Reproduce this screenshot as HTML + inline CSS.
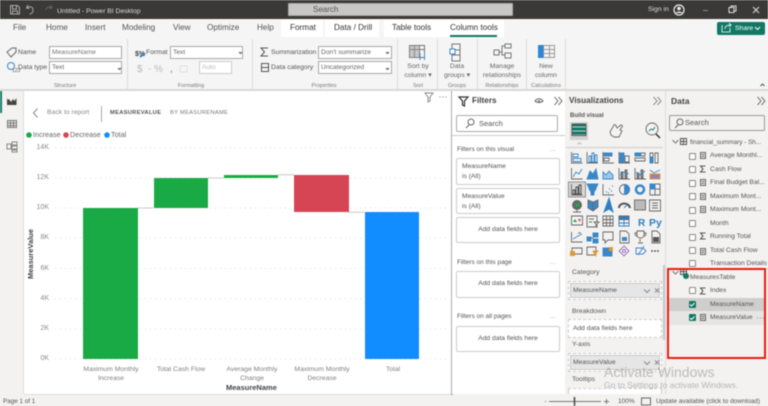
<!DOCTYPE html>
<html><head><meta charset="utf-8"><style>
html,body{margin:0;padding:0;width:768px;height:406px;overflow:hidden;background:#f3f2f1}
body{font-family:"Liberation Sans",sans-serif;color:#444;position:relative}
#r{position:absolute;left:0;top:0;width:768px;height:406px;overflow:hidden;filter:blur(.4px)}
#r div{position:absolute;box-sizing:border-box}
.t{white-space:nowrap;font-size:6.8px;line-height:10px;color:#555}
.c{text-align:center;white-space:nowrap;font-size:6.800px;line-height:9px;color:#666}
.tab{font-size:8.200px;line-height:12px;top:22px;white-space:nowrap;color:#555}
.inp{background:#fff;border:1px solid #a8a8a8;height:13px;font-size:6.700px;line-height:11px;padding-left:2px;color:#666;white-space:nowrap}
.lab{font-size:5.500px;line-height:8px;color:#777;text-align:center;top:82px;white-space:nowrap}
.sep{width:1px;background:#dcdcdc;top:39px;height:50px}
.y{font-size:7px;line-height:8px;color:#888;text-align:right;width:20px;left:29px}
.x{font-size:6.800px;line-height:9px;color:#808080;text-align:center;white-space:nowrap}
.card{background:#fff;border:1px solid #ccc;border-radius:2px;left:456px;width:104px;font-size:6.700px;color:#555}
.add{text-align:center;line-height:24px}
.d{font-size:6.700px;line-height:10px;left:710px;color:#555;white-space:nowrap}
.cb{left:689px;width:7px;height:7px;border:1px solid #888;background:#fff;border-radius:1px}
.well{border:1px dashed #ccc;background:#fff;left:568px;width:94px;height:19px}
.fld{left:570px;width:90px;height:15px;background:#e6e6e6;border:1px solid #c8c8c8;font-size:6.700px;line-height:13px;padding-left:2px;color:#555}
.sec{left:572px;font-size:6.800px;line-height:10px;color:#555}
</style></head><body><div id="r">

<div style="left:0;top:0;width:768px;height:19px;background:#3a3937"></div>
<svg style="position:absolute;left:0;top:0" width="768" height="19" fill="none">
<path d="M10.500 5.500h7l2 2v6.500h-9z M12.500 6v3h4V6 M12.500 14v-3h5v3" stroke="#a8a8a8"/>
<path d="M28 5l-1.500 3 3 .5 M27 8c3-2.500 6-1 6 2s-2 4-3.500 4" stroke="#a8a8a8"/>
<path d="M51 5l1 3-3 .5 M52 8c-2-2-6-1-6 2" stroke="#666"/>
<circle cx="303" cy="8.500" r="3" stroke="#333"/><path d="M300.500 11l-2.500 3" stroke="#333"/>
<circle cx="679" cy="10" r="5" stroke="#eee" stroke-width="1.200"/><circle cx="679" cy="8.500" r="1.800" fill="#eee"/><path d="M675.500 13c1-2 6-2 7 0" fill="#eee"/>
<path d="M703 10.500h5" stroke="#888"/>
<path d="M729 7.500h5v5h-5z M731 7.500v-1.500h5v5h-2" stroke="#ddd"/>
<path d="M753 7l6 6M759 7l-6 6" stroke="#ddd"/>
</svg>
<div class="t" style="left:57px;top:7px;color:#ddd">Untitled - Power BI Desktop</div>
<div style="left:288px;top:3px;width:225px;height:13px;background:#c8c7c6;border:1px solid #aaa;border-radius:1px"></div>
<div class="t" style="left:313px;top:5px;font-size:8px;color:#555">Search</div>
<div class="t" style="left:648px;top:5px;color:#ddd">Sign in</div>

<div style="left:0;top:19px;width:768px;height:71px;background:#f5f5f5"></div>
<div style="left:281px;top:20px;width:42px;height:17px;background:#fff"></div>
<div style="left:325px;top:20px;width:54px;height:17px;background:#fff"></div>
<div style="left:384px;top:20px;width:58px;height:17px;background:#fff"></div>
<div style="left:441px;top:20px;width:63px;height:17px;background:#fff"></div>
<div class="tab" style="left:13px">File</div>
<div class="tab" style="left:46px">Home</div>
<div class="tab" style="left:85px">Insert</div>
<div class="tab" style="left:122px">Modeling</div>
<div class="tab" style="left:173px">View</div>
<div class="tab" style="left:207px">Optimize</div>
<div class="tab" style="left:257px">Help</div>
<div class="tab" style="left:290px;color:#333">Format</div>
<div class="tab" style="left:334px;color:#333">Data / Drill</div>
<div class="tab" style="left:392px;color:#333">Table tools</div>
<div class="tab" style="left:450px;color:#333">Column tools</div>
<div style="left:450px;top:35px;width:47px;height:1.500px;background:#117865"></div>
<div style="left:717px;top:22px;width:48px;height:13px;background:#117865;border-radius:2px"></div>
<div class="t" style="left:735px;top:24px;color:#fff">Share</div>

<div class="t" style="left:18px;top:48px">Name</div>
<div class="inp" style="left:49px;top:46px;width:73px;color:#777">MeasureName</div>
<div class="t" style="left:18px;top:63px">Data type</div>
<div class="inp" style="left:49px;top:61px;width:73px">Text</div>
<div class="lab" style="left:49px;width:32px">Structure</div>
<div class="sep" style="left:127px"></div>
<div class="t" style="left:146px;top:48px">Format</div>
<div class="inp" style="left:170px;top:46px;width:73px">Text</div>
<div class="inp" style="left:199px;top:61px;width:33px;border-color:#ccc;color:#bbb">Auto</div>
<div class="lab" style="left:175px;width:32px">Formatting</div>
<div class="sep" style="left:252px"></div>
<div class="t" style="left:271px;top:48px">Summarization</div>
<div class="inp" style="left:318px;top:46px;width:74px">Don't summarize</div>
<div class="t" style="left:271px;top:63px">Data category</div>
<div class="inp" style="left:318px;top:61px;width:74px">Uncategorized</div>
<div class="lab" style="left:308px;width:32px">Properties</div>
<div class="sep" style="left:397px"></div>
<div class="c" style="left:400px;top:62px;width:36px">Sort by<br>column ▾</div>
<div class="lab" style="left:400px;width:36px">Sort</div>
<div class="sep" style="left:437px"></div>
<div class="c" style="left:438px;top:62px;width:38px">Data<br>groups ▾</div>
<div class="lab" style="left:438px;width:38px">Groups</div>
<div class="sep" style="left:477px"></div>
<div class="c" style="left:478px;top:62px;width:48px">Manage<br>relationships</div>
<div class="lab" style="left:478px;width:48px">Relationships</div>
<div class="sep" style="left:526px"></div>
<div class="c" style="left:527px;top:62px;width:38px">New<br>column</div>
<div class="lab" style="left:527px;width:38px">Calculations</div>
<div class="sep" style="left:565px"></div>
<svg style="position:absolute;left:0;top:0" width="768" height="90" fill="none">
<path d="M722 25v7h8v-4 M725 29c0-3 2-4 6-4l-2-2m2 2l-2 2" stroke="#fff" stroke-width=".8"/>
<path d="M755 27l2.500 2.500 2.500-2.500" stroke="#fff"/>
<path d="M7 52l5-4h4v4l-5 5z" stroke="#666"/>
<circle cx="11" cy="66" r="3.500" stroke="#3a87c8"/>
<path d="M118 68l1.500 1.500L121 68M239 52l1.500 1.500L242 52M386 52l1.500 1.500L389 52M386 68l1.500 1.500L389 68" stroke="#555"/>
<text x="12" y="72" font-size="5" fill="#555" font-family="Liberation Sans">123</text>
<text x="135" y="56" font-size="7" fill="#444" font-weight="bold" font-family="Liberation Sans">$%</text>
<path d="M140 57l5-4" stroke="#3a87c8" stroke-width="2"/>
<text x="137" y="72" font-size="10" fill="#bbb" font-family="Liberation Sans">$</text>
<text x="148" y="71" font-size="6" fill="#bbb" font-family="Liberation Sans">~</text>
<text x="154" y="72" font-size="10" fill="#bbb" font-family="Liberation Sans">%</text>
<text x="170" y="72" font-size="10" fill="#aaa" font-weight="bold" font-family="Liberation Sans">,</text>
<path d="M180 66h7v6h-7z" stroke="#ccc" stroke-dasharray="1 1"/>
<path d="M268 48h-7l3.500 4-3.500 4h7" stroke="#555"/>
<path d="M261.500 63.500h7v8h-7zM261.500 67.500h7" stroke="#555"/>
<path d="M409.500 45.500h15v12h-15z M409.500 49.500h15 M414.500 45.500v12 M419.500 45.500v12" stroke="#777"/>
<path d="M409.500 45.500h10v12h-10z" fill="#999" opacity=".5"/>
<path d="M420 53v7M424.500 52v8" stroke="#3a87c8"/>
<path d="M452 44h8v17h-8zM452 50h8M452 55h8" stroke="#777"/><path d="M450 49h5v5h-5z" fill="#fff" stroke="#3a87c8"/>
<path d="M494 50h5v5h-5zM505 44h6v4h-6zM505 53h6v5h-6zM499 52h3v-6h3M502 52v3h3" stroke="#777"/>
<path d="M538.500 45.500h16v12h-16z M538.500 49.500h16M538.500 53.500h16 M543.500 45.500v12 M549.500 45.500v12" stroke="#999"/>
<path d="M538 45h5.500v13H538z" fill="#2f86d4"/>
<path d="M760.500 86l2-2 2 2" stroke="#555"/>
</svg>
<div style="left:0;top:89px;width:768px;height:2px;background:#d8d8d8"></div>

<!-- left rail -->
<div style="left:0;top:91px;width:2px;height:22px;background:#117865"></div>
<svg style="position:absolute;left:0;top:90px" width="24" height="70" fill="none">
<path d="M7 8v7h9.500V8l-2 3-1.500-2-2 3-2-3-1 1z" fill="#444"/>
<path d="M7.500 30.500h9v7h-9z M7.500 33h9M7.500 35.500h9M10.500 30.500v7M13.500 30.500v7" stroke="#777"/>
<path d="M7 54h4v5H7zM12 52h5v3h-5zM12 56h5v3h-5zM12 60h5v2h-5zM11 56h1" stroke="#888"/>
</svg>
<div style="left:23px;top:91px;width:1px;height:303px;background:#ddd"></div>

<!-- canvas -->
<div style="left:24px;top:91px;width:427px;height:304px;background:#fff"></div>
<div style="left:451px;top:91px;width:1.500px;height:304px;background:#aaa"></div>
<div style="left:24px;top:394px;width:427px;height:1px;background:#ddd"></div>
<svg style="position:absolute;left:0;top:90px" width="452" height="305" fill="none">
<path d="M37.500 18.500l-4 4.500 4 4.500" stroke="#888"/>
<path d="M101.500 16v16" stroke="#aaa"/>
<path d="M425 3h8l-3 4v4l-2 1V7z" stroke="#888"/>
<path d="M55 57.700H447M55 88H447M55 118H447M55 148H447M55 178.500H447M55 208.700H447M55 239H447M55 269H447" stroke="#ddd" stroke-dasharray="1 4"/>
<path d="M137.500 118h16M207.500 88h16.500M278 84.700h16M348.500 122.300h16" stroke="#c8c8c8"/>
<circle cx="29" cy="45" r="2.800" fill="#1aaa45"/>
<circle cx="66" cy="45" r="2.800" fill="#d94452"/>
<circle cx="107" cy="45" r="2.800" fill="#118dff"/>
<circle cx="440" cy="7" r=".6" fill="#888"/><circle cx="443" cy="7" r=".6" fill="#888"/><circle cx="446" cy="7" r=".6" fill="#888"/>
</svg>
<div class="t" style="left:47px;top:108px;color:#888">Back to report</div>
<div class="t" style="left:110px;top:108px;font-size:5.800px;font-weight:bold;color:#555;letter-spacing:.25px">MEASUREVALUE</div>
<div class="t" style="left:170px;top:108px;font-size:5.800px;color:#777;letter-spacing:.25px">BY MEASURENAME</div>
<div class="t" style="left:33px;top:130px;font-size:7.200px;color:#666">Increase</div>
<div class="t" style="left:70px;top:130px;font-size:7.200px;color:#666">Decrease</div>
<div class="t" style="left:111px;top:130px;font-size:7.200px;color:#666">Total</div>

<div class="y" style="top:144px">14K</div>
<div class="y" style="top:174px">12K</div>
<div class="y" style="top:204px">10K</div>
<div class="y" style="top:234px">8K</div>
<div class="y" style="top:265px">6K</div>
<div class="y" style="top:295px">4K</div>
<div class="y" style="top:325px">2K</div>
<div class="y" style="top:355px">0K</div>
<div style="left:83px;top:208px;width:54.500px;height:151px;background:#1aaa45"></div>
<div style="left:153.500px;top:178px;width:54px;height:30px;background:#1aaa45"></div>
<div style="left:224px;top:174.500px;width:54px;height:3.500px;background:#1aaa45"></div>
<div style="left:294px;top:174.700px;width:54.500px;height:37.600px;background:#d64554"></div>
<div style="left:364.500px;top:212px;width:54px;height:147px;background:#118dff"></div>
<div class="x" style="left:70px;top:365px;width:82px">Maximum Monthly<br>Increase</div>
<div class="x" style="left:140px;top:365px;width:82px">Total Cash Flow</div>
<div class="x" style="left:211px;top:365px;width:82px">Average Monthly<br>Change</div>
<div class="x" style="left:281px;top:365px;width:82px">Maximum Monthly<br>Decrease</div>
<div class="x" style="left:352px;top:365px;width:82px">Total</div>
<div class="t" style="left:226px;top:383px;font-size:7.500px;font-weight:bold;color:#444">MeasureName</div>
<div class="t" style="left:6px;top:249px;width:50px;text-align:center;font-size:7.500px;font-weight:bold;color:#444;transform:rotate(-90deg)">MeasureValue</div>

<!-- filters -->
<div style="left:452px;top:91px;width:113px;height:303px;background:#fff"></div>
<div style="left:564.500px;top:91px;width:1px;height:303px;background:#ddd"></div>
<svg style="position:absolute;left:452px;top:90px" width="113" height="40" fill="none">
<path d="M7 7h9l-3.500 4v5l-2-1v-4z" stroke="#333" stroke-width="1.200"/>
<path d="M83 11c2-3 6-3 8 0-2 2-6 2-8 0z" stroke="#666"/><circle cx="87" cy="11" r="1" fill="#666"/>
<path d="M102.500 7l3.500 4-3.500 4M106.500 7l3.500 4-3.500 4" stroke="#777"/>
<circle cx="19" cy="32" r="3" stroke="#666"/><path d="M17 35l-3 3" stroke="#666"/>
</svg>
<div class="t" style="left:472px;top:96px;font-size:8.200px;font-weight:bold;color:#444">Filters</div>
<div style="left:456px;top:115px;width:102px;height:17px;border:1px solid #aaa;border-radius:2px"></div>
<div class="t" style="left:479px;top:119px;font-size:7.500px;color:#555">Search</div>
<div style="left:452px;top:135px;width:113px;height:1px;background:#ccc"></div>
<div class="t" style="left:457px;top:145px;font-size:6.500px;color:#555">Filters on this visual</div>
<div class="t" style="left:550px;top:145px;color:#999">...</div>
<div class="card" style="top:158px;height:27px;padding:3px 5px;line-height:10px">MeasureName<br>is (All)</div>
<div class="card" style="top:188px;height:26px;padding:3px 5px;line-height:10px">MeasureValue<br>is (All)</div>
<div class="card add" style="top:217px;height:26px">Add data fields here</div>
<div class="t" style="left:457px;top:258px;font-size:6.500px;color:#555">Filters on this page</div>
<div class="t" style="left:550px;top:258px;color:#999">...</div>
<div class="card add" style="top:271px;height:27px">Add data fields here</div>
<div class="t" style="left:457px;top:312px;font-size:6.500px;color:#555">Filters on all pages</div>
<div class="t" style="left:550px;top:312px;color:#999">...</div>
<div class="card add" style="top:326px;height:26px">Add data fields here</div>

<!-- visualizations -->
<div style="left:565px;top:91px;width:102px;height:303px;background:#f3f2f1"></div>
<div class="t" style="left:569px;top:96px;font-size:8.200px;font-weight:bold;color:#444">Visualizations</div>
<div class="t" style="left:570px;top:111px;font-size:6px;font-weight:bold;color:#555">Build visual</div>
<div style="left:569.500px;top:122px;width:18px;height:18px;background:#d2d2d2"></div>
<div style="left:566px;top:147px;width:97px;height:1px;background:#ccc"></div>
<svg style="position:absolute;left:565px;top:90px" width="102" height="180" fill="none" stroke="#666" stroke-width=".9">
<path d="M7 38h14M7 42h14M7 46h14" stroke="#117865" stroke-width="3" transform="translate(0 -3)"/>
<path d="M7 34.500h14v11H7z" stroke="#555"/>
<path d="M45 42l4-7c1-1 2 0 2 1l1 2 4-3c1 0 2 1 1 2l-2 3 2 1-3 6-5 0-3-2z" stroke="#666"/>
<circle cx="87" cy="39" r="6" stroke="#666"/><path d="M91 44l4 4" stroke="#333" stroke-width="1.500"/><path d="M84 41l2-2 2 1 2-3" stroke="#117865"/>
<path d="M12.500 54.500l2-2 2 2" stroke="#bbb"/>
<!-- row 1 -->
<path d="M6.500 62v11h11"/><path d="M8 64h5v3H8zM8 68.500h8v3H8z" stroke="#3a87c8"/>
<path d="M22 62v11h11"/><path d="M24 66h2v6h-2zM27 63h2v9h-2zM30 65h2v7h-2z" stroke="#3a87c8"/>
<path d="M38 62v11h11"/><path d="M39 63h8v3h-8z" fill="#3a87c8" stroke="#3a87c8"/><path d="M39 68h5v3h-5z"/>
<path d="M54 62v11h11"/><path d="M55 63h4v9h-4z" fill="#3a87c8" stroke="#3a87c8"/><path d="M60 66h4v6h-4z"/>
<path d="M70 63h10v3H70zM70 68h10v3H70z"/><path d="M70 63h6v3h-6z" fill="#3a87c8" stroke="#3a87c8"/>
<path d="M85 63h3v10h-3zM90 63h3v10h-3z"/><path d="M85 67h3v6h-3z" fill="#3a87c8" stroke="#3a87c8"/>
<!-- row 2 -->
<path d="M6.500 78v11h11"/><path d="M8 87l3-5 3 2 3-5" stroke="#3a87c8"/>
<path d="M22 89l3-8 3 3 3-5 2 10z" fill="#3a87c8" stroke="#3a87c8"/>
<path d="M38 82l3 3 3-4 4 4v4H38z" fill="#9cc7ea" stroke="#3a87c8"/>
<path d="M54 78v11h11"/><path d="M56 82h2v6h-2zM60 80h2v8h-2z" fill="#888"/><path d="M55 85l4-3 5 2" stroke="#3a87c8"/>
<path d="M70 78v11h11"/><path d="M72 83h2v5h-2zM76 80h2v8h-2z" fill="#888"/><path d="M71 82l4 3 5-4" stroke="#3a87c8"/>
<path d="M85 84h10v5H85z" fill="#9a7fb8" stroke="#e39a2d"/><path d="M85 80l4 3 6-3" stroke="#3a87c8"/>
<!-- row 3 -->
<rect x="3.500" y="92" width="17" height="15" fill="#d8d8d8" stroke="#888"/>
<path d="M6.500 94v11h11"/><path d="M8 100h2v4H8zM11 97h2v7h-2zM14 95h2v9h-2z" stroke="#444"/>
<path d="M22 94h11l-2 4h-7zM24 99h7l-2 3h-3zM26 103h3v2h-3z" fill="#3a87c8" stroke="#3a87c8"/>
<path d="M38 94v11h11"/><path d="M41 102h1M44 99h1M47 96h1M43 103h1M46 101h1" stroke="#3a87c8" stroke-width="1.200"/>
<circle cx="59.500" cy="99.500" r="5"/><path d="M59.500 94.500a5 5 0 0 1 0 10z" fill="#3a87c8" stroke="#3a87c8"/>
<circle cx="75" cy="99.500" r="4" stroke="#3a87c8" stroke-width="2.500"/>
<path d="M85 94h10v11H85zM85 99h10M90 94v11"/><path d="M85 94h5v5h-5z" fill="#3a87c8" stroke="#3a87c8"/>
<!-- row 4 -->
<circle cx="12" cy="115" r="4.500" fill="#666"/><circle cx="12" cy="115" r="2" fill="#1aaa45" stroke="none"/><path d="M12 120v2M8 122h8"/>
<path d="M23 110l5 2 5-2v7l-5 4-5-3z" fill="#3a87c8"/><path d="M28 112v8"/>
<path d="M44 108l-5 14 5-3 4 3z" fill="#2f7fc4" stroke="#2f7fc4"/>
<path d="M54 118c0-6 10-6 11 0" stroke="#555" stroke-width="2"/><path d="M59 118l3-3" stroke="#3a87c8"/>
<rect x="69.500" y="110" width="11" height="10" fill="#bbb"/>
<path d="M84.500 110h11v11h-11zM87 113h6M87 115.500h6M87 118h6"/>
<!-- row 5 -->
<path d="M6.500 126h11v9h-11z"/><path d="M8 132l2-3 2 3z" fill="#1aaa45" stroke="none"/><path d="M13 129h3l-1.500 3z" fill="#d64554" stroke="none"/>
<path d="M22 126h10v11H22zM24 129h5M24 132h3"/><path d="M29 132h5l-2 2v3l-1-1v-2z" fill="#fff"/>
<path d="M38 126h10v10H38zM38 129.500h10M38 133h10M41.500 126v10M45 126v10"/>
<path d="M54 126h10v10H54zM54 129.500h10M54 133h10M59 126v10" stroke="#2f7fc4"/><path d="M54 126h10v3.500H54z" fill="#2f7fc4"/>
<text x="73" y="136" font-size="10" font-weight="bold" fill="#2f7fc4" stroke="none" font-family="Liberation Sans">R</text>
<text x="84" y="136" font-size="10.500" font-weight="bold" fill="#2f7fc4" stroke="none" font-family="Liberation Sans">Py</text>
<!-- row 6 -->
<path d="M6.500 142v10h11"/><path d="M8 149l5-3 4-2" stroke="#3a87c8"/><path d="M13 143h3"/>
<path d="M22 147h4v4h-4zM28 143h5v4h-5zM28 149h5v4h-5z" fill="#3a87c8" stroke="#3a87c8"/><path d="M26 148h2"/>
<path d="M38 142h10v8h-5l-3 3v-3h-2z"/>
<path d="M55 141h6l3 3v9H55z"/><path d="M57 147h5v4h-5z" fill="#3a87c8" stroke="none"/>
<path d="M72 141h7v4c0 4-7 4-7 0zM75 149v3M73 153h5M72 143h-2c0 2 1 3 2 3M79 143h2c0 2-1 3-2 3"/>
<path d="M87 141h5l3 3v9H87z"/><path d="M88 147h6v5h-6z" fill="#555" stroke="none"/>
<!-- row 7 -->
<path d="M7 158h10v6H7z"/><path d="M5 161h5v5H5z" fill="#e39a2d" stroke="none"/>
<path d="M22 157h9v8H22z"/><path d="M28 161h5l-2 2v3l-1-1z" fill="#e39a2d" stroke="#e39a2d"/>
<path d="M38 158h9v8H38z" fill="#3a87c8" stroke="#3a87c8"/><path d="M44 157h4v4h-4z" fill="#e39a2d" stroke="none"/>
<path d="M59 156l5 5-5 5-5-5z" stroke="#9a6fb8"/><circle cx="59" cy="161" r="1.500" stroke="#9a6fb8"/>
<path d="M71 158h7l3 3-3 3h-7zM73 165l6-9" stroke="#3a87c8"/>
<circle cx="87" cy="161" r=".6"/><circle cx="90" cy="161" r=".6"/><circle cx="93" cy="161" r=".6"/>
<path d="M656.500 0" />
<path d="M92.500 7l3.500 4-3.500 4M96.500 7l3.500 4-3.500 4" stroke="#777" transform="translate(-4 0)"/>
</svg>
<div style="left:665px;top:91px;width:1px;height:303px;background:#ddd"></div>
<div style="left:663px;top:265px;width:2px;height:75px;background:#c8c8c8"></div>
<div class="sec" style="top:268px">Category</div>
<div class="well" style="top:281px"></div>
<div class="fld" style="top:283px">MeasureName</div>
<div class="sec" style="top:307px">Breakdown</div>
<div class="well" style="top:319px;font-size:6.700px;line-height:17px;padding-left:4px;color:#555">Add data fields here</div>
<div class="sec" style="top:340px">Y-axis</div>
<div class="well" style="top:353px"></div>
<div class="fld" style="top:355px">MeasureValue</div>
<div class="sec" style="top:375px">Tooltips</div>
<div class="well" style="top:388px;height:6px;border-bottom:0"></div>
<svg style="position:absolute;left:565px;top:280px" width="102" height="95" fill="none" stroke="#888">
<path d="M79 9.500l3 3 3-3M90 8.500l4 4M94 8.500l-4 4"/>
<path d="M79 81.500l3 3 3-3M90 80.500l4 4M94 80.500l-4 4"/>
</svg>

<!-- data -->
<div class="t" style="left:671px;top:96px;font-size:8.500px;font-weight:bold;color:#444">Data</div>
<div style="left:669px;top:115px;width:96px;height:16px;border:1px solid #999;border-radius:2px"></div>
<div class="t" style="left:685px;top:118px;font-size:7.500px;color:#555">Search</div>
<svg style="position:absolute;left:665px;top:90px" width="103" height="250" fill="none" stroke="#777">
<path d="M92.500 7l3.500 4-3.500 4M96.500 7l3.500 4-3.500 4" stroke="#777"/>
<circle cx="15" cy="32" r="3" stroke="#666"/><path d="M13 35l-3 3" stroke="#666"/>
<path d="M7.500 50l3 3 3-3"/>
<path d="M15.500 48.500h6v6h-6zM15.500 51.500h6M18.500 48.500v6" stroke="#555"/>
<path d="M7.500 181l3 3 3-3"/>
<path d="M15.500 178.500h6v6h-6zM15.500 181.500h6M18.500 178.500v6" stroke="#555"/>
<circle cx="21" cy="186" r="3" fill="#117865" stroke="none"/>
<path d="M35.500 62.500h5v6h-5zM36.500 64.500h3M36.500 66.500h3" stroke="#666"/>
<path d="M35.500 89.500h5v6h-5zM36.500 91.500h3M36.500 93.500h3" stroke="#666"/>
<path d="M35.500 103.500h5v6h-5zM36.500 105.500h3M36.500 107.500h3" stroke="#666"/>
<path d="M35.500 116.500h5v6h-5zM36.500 118.500h3M36.500 120.500h3" stroke="#666"/>
<path d="M35.500 158.500h5v6h-5zM36.500 160.500h3M36.500 162.500h3" stroke="#666"/>
<path d="M40.500 76h-5l2.500 3-2.500 3h5" stroke="#555"/>
<path d="M40.500 143h-5l2.500 3-2.500 3h5" stroke="#555"/>
<path d="M40.500 198h-5l2.500 3-2.500 3h5" stroke="#555"/>
</svg>
<div class="d" style="top:138px;font-size:6.300px;left:690px">financial_summary - Sh...</div>
<div class="cb" style="top:153px"></div><div class="d" style="top:151px">Average Monthl...</div>
<div class="cb" style="top:166px"></div><div class="d" style="top:165px">Cash Flow</div>
<div class="cb" style="top:180px"></div><div class="d" style="top:178px">Final Budget Bal...</div>
<div class="cb" style="top:193px"></div><div class="d" style="top:192px">Maximum Mont...</div>
<div class="cb" style="top:207px"></div><div class="d" style="top:205px">Maximum Mont...</div>
<div class="cb" style="top:220px"></div><div class="d" style="top:219px">Month</div>
<div class="cb" style="top:234px"></div><div class="d" style="top:232px">Running Total</div>
<div class="cb" style="top:247px"></div><div class="d" style="top:246px">Total Cash Flow</div>
<div class="cb" style="top:260px"></div><div class="d" style="top:259px">Transaction Details</div>
<div class="d" style="left:690px;top:273px">MeasuresTable</div>
<div class="cb" style="top:287px"></div><div class="d" style="top:286px">Index</div>
<div style="left:669px;top:298px;width:96px;height:13px;background:#cfcecd"></div>
<div style="left:669px;top:311px;width:96px;height:14px;background:#e6e5e4"></div>
<div class="cb" style="top:301px;background:#117865;border-color:#117865"></div><div class="d" style="top:300px">MeasureName</div>
<div class="cb" style="top:314px;background:#117865;border-color:#117865"></div><div class="d" style="top:313px">MeasureValue</div>
<svg style="position:absolute;left:665px;top:295px" width="103" height="35" fill="none">
<path d="M25 9.500l1.500 1.500 3-3M25 23l1.500 1.500 3-3" stroke="#fff"/>
<path d="M35.500 19.500h5v6h-5zM36.500 21.500h3M36.500 23.500h3" stroke="#666"/>
<path d="M92 23h1M95 23h1M98 23h1" stroke="#888"/>
</svg>
<div style="left:667px;top:268px;width:99px;height:91px;border:2px solid #f01a10"></div>

<!-- status -->
<div style="left:0;top:395px;width:768px;height:11px;background:#f3f2f1"></div>
<div class="t" style="left:3px;top:397px;font-size:6.300px;color:#555">Page 1 of 1</div>
<svg style="position:absolute;left:540px;top:395px" width="115" height="11" fill="none">
<path d="M5 6.500h1M9 6.500h52" stroke="#777"/><path d="M34.500 2v9" stroke="#444" stroke-width="1.500"/>
<path d="M64 6.500h5M66.500 4v5" stroke="#777"/>
<path d="M101.500 3h9v7h-9z" stroke="#666"/>
</svg>
<div class="t" style="left:618px;top:397px;font-size:6.500px;color:#555">100%</div>
<div class="t" style="left:656px;top:397px;font-size:6.500px;color:#555">Update available (click to download)</div>

<!-- activate -->
<div class="t" style="left:604px;top:365px;font-size:14px;line-height:14px;color:rgba(120,120,120,.45)">Activate Windows</div>
<div class="t" style="left:604px;top:380px;font-size:8.500px;color:rgba(120,120,120,.5)">Go to Settings to activate Windows.</div>
</div></body></html>
